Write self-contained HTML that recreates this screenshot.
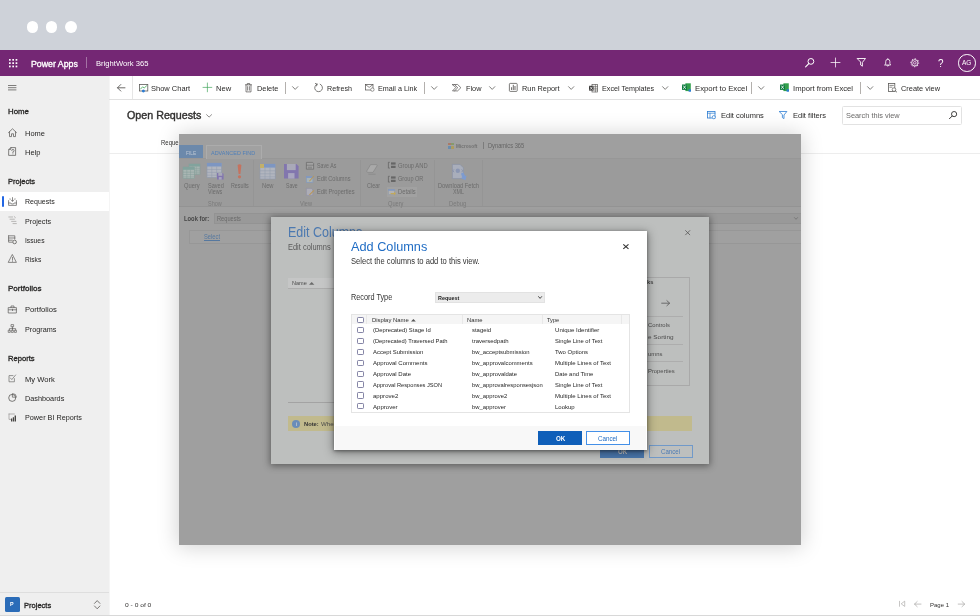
<!DOCTYPE html>
<html><head><meta charset="utf-8"><title>Power Apps</title>
<style>
html,body{margin:0;padding:0;}
body{width:980px;height:616px;position:relative;overflow:hidden;background:#fff;
font-family:"Liberation Sans",sans-serif;}
div,span.t,svg{position:absolute;display:block;box-sizing:border-box;}
span.t{white-space:nowrap;transform-origin:0 50%;}
svg{overflow:visible;}
#root{left:0;top:0;width:980px;height:616px;will-change:transform;}
</style></head>
<body>
<div id="root">
<div style="left:0px;top:0px;width:980px;height:50px;background:#ced2d9;"></div>
<div style="left:26.6px;top:21.299999999999997px;width:11.8px;height:11.8px;background:#fff;border-radius:50%;"></div>
<div style="left:45.7px;top:21.299999999999997px;width:11.8px;height:11.8px;background:#fff;border-radius:50%;"></div>
<div style="left:65.1px;top:21.299999999999997px;width:11.8px;height:11.8px;background:#fff;border-radius:50%;"></div>
<div style="left:0px;top:50px;width:980px;height:26px;background:#742774;"></div>
<div style="left:0px;top:76px;width:109px;height:540px;background:#efefef;"></div>
<div style="left:109px;top:76px;width:1px;height:540px;background:#f5f5f5;"></div>
<div style="left:109px;top:99px;width:871px;height:1px;background:#e1e1e1;"></div>
<div style="left:132px;top:76px;width:1px;height:23px;background:#e6e6e6;"></div>
<div style="left:109px;top:153px;width:871px;height:1px;background:#ededed;"></div>
<div style="left:0px;top:615px;width:980px;height:1px;background:#d8d8d8;"></div>
<div style="left:0px;top:592px;width:109px;height:1px;background:#dedede;"></div>
<svg style="left:8.6px;top:58.6px;" width="9" height="9" viewBox="0 0 9 9"><rect x="0.0" y="0.0" width="1.7" height="1.7" fill="#fff"/><rect x="0.0" y="3.3" width="1.7" height="1.7" fill="#fff"/><rect x="0.0" y="6.6" width="1.7" height="1.7" fill="#fff"/><rect x="3.3" y="0.0" width="1.7" height="1.7" fill="#fff"/><rect x="3.3" y="3.3" width="1.7" height="1.7" fill="#fff"/><rect x="3.3" y="6.6" width="1.7" height="1.7" fill="#fff"/><rect x="6.6" y="0.0" width="1.7" height="1.7" fill="#fff"/><rect x="6.6" y="3.3" width="1.7" height="1.7" fill="#fff"/><rect x="6.6" y="6.6" width="1.7" height="1.7" fill="#fff"/></svg>
<span class="t" style="transform:scaleX(0.9744);left:30.7px;top:60px;font-size:9px;line-height:9px;font-weight:400;color:#fff;-webkit-text-stroke:0.35px #fff;">Power Apps</span>
<div style="left:86px;top:57px;width:1px;height:11px;background:rgba(255,255,255,0.35);"></div>
<span class="t" style="transform:scaleX(1.0038);left:95.8px;top:60px;font-size:7.6px;line-height:7.6px;font-weight:400;color:#fff;">BrightWork 365</span>
<svg style="left:804.5px;top:58px;" width="9.5" height="9.5" viewBox="0 0 9.5 9.5"><circle cx="5.9" cy="3.4" r="2.9" stroke="#fff" stroke-width="1" fill="none"/><path d="M3.8 5.6 L0.6 8.9" stroke="#fff" stroke-width="1.1" fill="none" stroke-linecap="round" stroke-linejoin="round"/></svg>
<svg style="left:831px;top:58px;" width="9" height="9" viewBox="0 0 9 9"><path d="M4.5 0 V9 M0 4.5 H9" stroke="#fff" stroke-width="0.75" fill="none" stroke-linecap="round" stroke-linejoin="round"/></svg>
<svg style="left:857px;top:58.3px;" width="9" height="9" viewBox="0 0 9 9"><path d="M0.5 0.5 H8.5 L5.4 4.4 V8.2 L3.6 7 V4.4 Z" stroke="#fff" stroke-width="0.9" fill="none" stroke-linecap="round" stroke-linejoin="round"/></svg>
<svg style="left:884.3px;top:57.6px;" width="7.6" height="9.6" viewBox="0 0 7.6 9.6"><path d="M0.9 7 H6.7 L5.9 5.8 V3.6 A2.1 2.3 0 0 0 1.7 3.6 V5.8 Z M3.8 1.2 V0.6 M2.9 7.4 A0.95 1.1 0 0 0 4.7 7.4" stroke="#fff" stroke-width="0.8" fill="none" stroke-linecap="round" stroke-linejoin="round"/></svg>
<svg style="left:909.5px;top:57.8px;" width="9.6" height="9.6" viewBox="0 0 9.6 9.6"><circle cx="4.8" cy="4.8" r="3.9" stroke="#fff" stroke-width="1.0" fill="none" stroke-dasharray="1.55 1.51" stroke-dashoffset="0.7"/><circle cx="4.8" cy="4.8" r="3.1" stroke="#fff" stroke-width="0.8" fill="none"/><circle cx="4.8" cy="4.8" r="1.3" stroke="#fff" stroke-width="0.7" fill="none"/></svg>
<span class="t" style="transform:scaleX(0.9412);left:937.8px;top:58px;font-size:10.5px;line-height:10.5px;font-weight:400;color:#fff;">?</span>
<div style="left:958px;top:54px;width:17.6px;height:17.6px;border:1px solid #fff;border-radius:50%;"></div>
<span class="t" style="transform:scaleX(0.9862);left:962.2px;top:60px;font-size:6.6px;line-height:6.6px;font-weight:400;color:#fff;">AG</span>
<svg style="left:7.6px;top:85.2px;" width="8.4" height="6" viewBox="0 0 8.4 6"><path d="M0 0.5 H8.4 M0 2.7 H8.4 M0 4.9 H8.4" stroke="#605e5c" stroke-width="0.8" fill="none"/></svg>
<svg style="left:116.6px;top:83.8px;" width="8" height="7.6" viewBox="0 0 8 7.6"><path d="M8 3.8 H0.6 M3.8 0.5 L0.5 3.8 L3.8 7.1" stroke="#484644" stroke-width="0.8" fill="none" stroke-linecap="round" stroke-linejoin="round"/></svg>
<svg style="left:138.7px;top:83.5px;" width="9.2" height="8.4" viewBox="0 0 9.2 8.4"><rect x="0.4" y="0.4" width="8.4" height="6.6" stroke="#5c5a58" stroke-width="0.8" fill="none"/><path d="M1.6 5 L3.6 2.8 L5.2 4 L7.6 1.8" stroke="#3aa655" stroke-width="0.8" fill="none" stroke-linecap="round" stroke-linejoin="round"/><circle cx="4.4" cy="6.9" r="1.5" fill="#2b7cd3"/></svg>
<span class="t" style="transform:scaleX(0.9758);left:151.4px;top:85px;font-size:7.7px;line-height:7.7px;font-weight:400;color:#2b2a29;">Show Chart</span>
<svg style="left:202.9px;top:83.3px;" width="8.8" height="8.8" viewBox="0 0 8.8 8.8"><path d="M4.4 0 V8.8 M0 4.4 H8.8" stroke="#45a85d" stroke-width="0.7" fill="none" stroke-linecap="round" stroke-linejoin="round"/></svg>
<span class="t" style="transform:scaleX(0.9876);left:216.3px;top:85px;font-size:7.7px;line-height:7.7px;font-weight:400;color:#2b2a29;">New</span>
<svg style="left:245px;top:83px;" width="7" height="9.4" viewBox="0 0 7 9.4"><path d="M0.5 1.8 H6.5 M2.3 1.8 V0.5 H4.7 V1.8 M1 1.8 V8.9 H6 V1.8 M2.6 3.6 V7.2 M4.4 3.6 V7.2" stroke="#5c5a58" stroke-width="0.75" fill="none" stroke-linecap="round" stroke-linejoin="round"/></svg>
<span class="t" style="transform:scaleX(0.9580);left:257.2px;top:85px;font-size:7.7px;line-height:7.7px;font-weight:400;color:#2b2a29;">Delete</span>
<div style="left:285.4px;top:82px;width:1px;height:11.5px;background:#b3b0ad;"></div>
<svg style="left:292.3px;top:86px;" width="6.4" height="4" viewBox="0 0 6.4 4"><path d="M0.3 0.4 L3.2 3.4 L6.1000000000000005 0.4" stroke="#605e5c" stroke-width="0.8" fill="none"/></svg>
<svg style="left:314.3px;top:83px;" width="9.2" height="9.4" viewBox="0 0 9.2 9.4"><path d="M6.2 1.2 A3.9 3.9 0 1 1 3 1.2 M3 1.2 L1.4 0.5 M3 1.2 L2.6 2.9" stroke="#5c5a58" stroke-width="0.8" fill="none" stroke-linecap="round" stroke-linejoin="round"/></svg>
<span class="t" style="transform:scaleX(0.9286);left:327px;top:85px;font-size:7.7px;line-height:7.7px;font-weight:400;color:#2b2a29;">Refresh</span>
<svg style="left:365px;top:84.2px;" width="9.4" height="7.4" viewBox="0 0 9.4 7.4"><rect x="0.4" y="0.4" width="7.6" height="5.6" stroke="#5c5a58" stroke-width="0.75" fill="none"/><path d="M0.6 0.7 L4.2 3.4 L7.8 0.7" stroke="#5c5a58" stroke-width="0.7" fill="none" stroke-linecap="round" stroke-linejoin="round"/><circle cx="7.4" cy="5.6" r="1.7" fill="#fff" stroke="#5c5a58" stroke-width="0.6"/></svg>
<span class="t" style="transform:scaleX(0.9337);left:377.9px;top:85px;font-size:7.7px;line-height:7.7px;font-weight:400;color:#2b2a29;">Email a Link</span>
<div style="left:424.2px;top:82px;width:1px;height:11.5px;background:#b3b0ad;"></div>
<svg style="left:431px;top:86px;" width="6.4" height="4" viewBox="0 0 6.4 4"><path d="M0.3 0.4 L3.2 3.4 L6.1000000000000005 0.4" stroke="#605e5c" stroke-width="0.8" fill="none"/></svg>
<svg style="left:452.3px;top:84px;" width="9.4" height="7.4" viewBox="0 0 9.4 7.4"><path d="M0.5 0.5 H5.6 L8.9 3.7 L5.6 6.9 H0.5 L3.6 3.7 Z M2.6 0.6 L5.8 3.7 L2.6 6.8" stroke="#5c5a58" stroke-width="0.75" fill="none" stroke-linecap="round" stroke-linejoin="round"/></svg>
<span class="t" style="transform:scaleX(0.9486);left:465.8px;top:85px;font-size:7.7px;line-height:7.7px;font-weight:400;color:#2b2a29;">Flow</span>
<svg style="left:488.8px;top:86px;" width="6.4" height="4" viewBox="0 0 6.4 4"><path d="M0.3 0.4 L3.2 3.4 L6.1000000000000005 0.4" stroke="#605e5c" stroke-width="0.8" fill="none"/></svg>
<svg style="left:509.4px;top:83.4px;" width="8.6" height="8.8" viewBox="0 0 8.6 8.8"><rect x="0.4" y="0.4" width="7.8" height="8" rx="0.8" stroke="#5c5a58" stroke-width="0.8" fill="none"/><path d="M2.6 6.6 V4.6 M4.3 6.6 V2.2 M6 6.6 V3.4" stroke="#5c5a58" stroke-width="0.9" fill="none" stroke-linecap="round" stroke-linejoin="round"/></svg>
<span class="t" style="transform:scaleX(0.9564);left:522.4px;top:85px;font-size:7.7px;line-height:7.7px;font-weight:400;color:#2b2a29;">Run Report</span>
<svg style="left:567.8px;top:86px;" width="6.4" height="4" viewBox="0 0 6.4 4"><path d="M0.3 0.4 L3.2 3.4 L6.1000000000000005 0.4" stroke="#605e5c" stroke-width="0.8" fill="none"/></svg>
<svg style="left:588.7px;top:83.6px;" width="9" height="8.4" viewBox="0 0 9 8.4"><rect x="3" y="0.4" width="5.6" height="7.6" stroke="#5c5a58" stroke-width="0.7" fill="none"/><path d="M5 2.4 H8.4 M5 4.2 H8.4 M5 6 H8.4 M6.4 0.6 V7.8" stroke="#5c5a58" stroke-width="0.6" fill="none" stroke-linecap="round" stroke-linejoin="round"/><rect x="0" y="1.8" width="4.6" height="4.8" fill="#3b3a39"/><path d="M1.3 3 L3.3 5.4 M3.3 3 L1.3 5.4" stroke="#fff" stroke-width="0.7" fill="none" stroke-linecap="round" stroke-linejoin="round"/></svg>
<span class="t" style="transform:scaleX(0.9348);left:601.6px;top:85px;font-size:7.7px;line-height:7.7px;font-weight:400;color:#2b2a29;">Excel Templates</span>
<svg style="left:662px;top:86px;" width="6.4" height="4" viewBox="0 0 6.4 4"><path d="M0.3 0.4 L3.2 3.4 L6.1000000000000005 0.4" stroke="#605e5c" stroke-width="0.8" fill="none"/></svg>
<svg style="left:682px;top:83.4px;" width="9.2" height="8.8" viewBox="0 0 9.2 8.8"><rect x="3.4" y="0.3" width="5.4" height="7.8" fill="#33a04c"/><rect x="0" y="1.5" width="5" height="5.4" fill="#107c41"/><path d="M1.5 2.9 L3.5 5.5 M3.5 2.9 L1.5 5.5" stroke="#fff" stroke-width="0.8" fill="none" stroke-linecap="round" stroke-linejoin="round"/><rect x="6.6" y="6.3" width="2.4" height="2.4" fill="#2b7cd3"/></svg>
<span class="t" style="transform:scaleX(1.0077);left:695.2px;top:85px;font-size:7.7px;line-height:7.7px;font-weight:400;color:#2b2a29;">Export to Excel</span>
<div style="left:751.2px;top:82px;width:1px;height:11.5px;background:#b3b0ad;"></div>
<svg style="left:758.4px;top:86px;" width="6.4" height="4" viewBox="0 0 6.4 4"><path d="M0.3 0.4 L3.2 3.4 L6.1000000000000005 0.4" stroke="#605e5c" stroke-width="0.8" fill="none"/></svg>
<svg style="left:780px;top:83.4px;" width="9.2" height="8.8" viewBox="0 0 9.2 8.8"><rect x="3.4" y="0.3" width="5.4" height="7.8" fill="#33a04c"/><rect x="0" y="1.5" width="5" height="5.4" fill="#107c41"/><path d="M1.5 2.9 L3.5 5.5 M3.5 2.9 L1.5 5.5" stroke="#fff" stroke-width="0.8" fill="none" stroke-linecap="round" stroke-linejoin="round"/><rect x="6.6" y="6.3" width="2.4" height="2.4" fill="#2b7cd3"/></svg>
<span class="t" style="transform:scaleX(0.9961);left:793px;top:85px;font-size:7.7px;line-height:7.7px;font-weight:400;color:#2b2a29;">Import from Excel</span>
<div style="left:859.5px;top:82px;width:1px;height:11.5px;background:#b3b0ad;"></div>
<svg style="left:866.6px;top:86px;" width="6.4" height="4" viewBox="0 0 6.4 4"><path d="M0.3 0.4 L3.2 3.4 L6.1000000000000005 0.4" stroke="#605e5c" stroke-width="0.8" fill="none"/></svg>
<svg style="left:888px;top:83.2px;" width="9" height="9" viewBox="0 0 9 9"><rect x="0.4" y="0.4" width="6.4" height="8" stroke="#5c5a58" stroke-width="0.8" fill="none"/><path d="M1.8 2.4 H5.4 M1.8 4.2 H4" stroke="#5c5a58" stroke-width="0.7" fill="none" stroke-linecap="round" stroke-linejoin="round"/><circle cx="6" cy="6.6" r="1.8" fill="#fff" stroke="#5c5a58" stroke-width="0.7"/><path d="M7.4 8 L8.7 9" stroke="#5c5a58" stroke-width="0.8" fill="none" stroke-linecap="round" stroke-linejoin="round"/></svg>
<span class="t" style="transform:scaleX(0.9607);left:901px;top:85px;font-size:7.7px;line-height:7.7px;font-weight:400;color:#2b2a29;">Create view</span>
<span class="t" style="transform:scaleX(0.9830);left:126.9px;top:110px;font-size:10.9px;line-height:10.9px;font-weight:400;color:#323130;-webkit-text-stroke:0.4px #323130;">Open Requests</span>
<svg style="left:206.4px;top:113.6px;" width="6.2" height="3.6" viewBox="0 0 6.2 3.6"><path d="M0.3 0.4 L3.1 3.1 L5.9 0.4" stroke="#605e5c" stroke-width="0.7" fill="none"/></svg>
<svg style="left:707.4px;top:111px;" width="8.8" height="8" viewBox="0 0 8.8 8"><rect x="0.4" y="0.4" width="7.6" height="6.6" stroke="#2b7cd3" stroke-width="0.8" fill="none"/><path d="M0.4 2.2 H8 M3 2.2 V7" stroke="#2b7cd3" stroke-width="0.7" fill="none" stroke-linecap="round" stroke-linejoin="round"/><circle cx="6.8" cy="6.2" r="1.6" fill="#fff" stroke="#2b7cd3" stroke-width="0.7"/></svg>
<span class="t" style="transform:scaleX(0.9724);left:721px;top:112px;font-size:7.7px;line-height:7.7px;font-weight:400;color:#2b2a29;">Edit columns</span>
<svg style="left:779px;top:111.2px;" width="8.4" height="8.2" viewBox="0 0 8.4 8.2"><path d="M0.5 0.5 H7.9 L5 4 V7.6 L3.4 6.6 V4 Z" stroke="#2b7cd3" stroke-width="0.8" fill="none" stroke-linecap="round" stroke-linejoin="round"/></svg>
<span class="t" style="transform:scaleX(0.9778);left:792.7px;top:112px;font-size:7.7px;line-height:7.7px;font-weight:400;color:#2b2a29;">Edit filters</span>
<div style="left:842.2px;top:105.5px;width:120px;height:19px;background:#fff;border:1px solid #e2e2e2;border-radius:1.5px;"></div>
<span class="t" style="transform:scaleX(0.9592);left:846px;top:112px;font-size:7.7px;line-height:7.7px;font-weight:400;color:#6b6a69;">Search this view</span>
<svg style="left:948.7px;top:111px;" width="8.2" height="8.2" viewBox="0 0 8.2 8.2"><circle cx="5.1" cy="3.1" r="2.6" stroke="#323130" stroke-width="0.9" fill="none"/><path d="M3.2 5 L0.5 7.7" stroke="#323130" stroke-width="1.0" fill="none" stroke-linecap="round" stroke-linejoin="round"/></svg>
<span class="t" style="transform:scaleX(0.9055);left:161px;top:140px;font-size:6.6px;line-height:6.6px;font-weight:400;color:#323130;">Reque</span>
<span class="t" style="transform:scaleX(1.0187);left:7.8px;top:108px;font-size:7.7px;line-height:7.7px;font-weight:400;color:#252423;-webkit-text-stroke:0.3px #252423;">Home</span>
<svg style="left:8px;top:127.8px;" width="9" height="9.2" viewBox="0 0 9 9.2"><path d="M0.5 4.6 L4.5 0.8 L8.5 4.6 M1.5 3.9 V8.6 H3.5 V5.8 H5.5 V8.6 H7.5 V3.9" stroke="#5a5856" stroke-width="0.75" fill="none" stroke-linecap="round" stroke-linejoin="round"/></svg>
<span class="t" style="transform:scaleX(0.9700);left:24.7px;top:130px;font-size:7.7px;line-height:7.7px;font-weight:400;color:#252423;">Home</span>
<svg style="left:8px;top:146.89999999999998px;" width="9" height="9.2" viewBox="0 0 9 9.2"><path d="M1 2.4 L2.8 0.6 H7.6 V8.4 H1 Z M1 2.4 H2.8 V0.6" stroke="#5a5856" stroke-width="0.75" fill="none" stroke-linecap="round" stroke-linejoin="round"/><path d="M3.7 3.6 A1.2 1.2 0 1 1 4.9 4.8 V5.6 M4.9 6.8 V7" stroke="#5a5856" stroke-width="0.7" fill="none" stroke-linecap="round" stroke-linejoin="round"/></svg>
<span class="t" style="transform:scaleX(0.9739);left:24.7px;top:149px;font-size:7.7px;line-height:7.7px;font-weight:400;color:#252423;">Help</span>
<span class="t" style="transform:scaleX(0.9755);left:7.8px;top:178px;font-size:7.7px;line-height:7.7px;font-weight:400;color:#252423;-webkit-text-stroke:0.3px #252423;">Projects</span>
<div style="left:0px;top:192.3px;width:109px;height:18.8px;background:#fff;"></div>
<div style="left:2.1px;top:196px;width:2px;height:11px;background:#2266e3;border-radius:1px;"></div>
<svg style="left:8px;top:196.7px;" width="9" height="9.2" viewBox="0 0 9 9.2"><path d="M0.6 3.6 V8.4 H8.4 V3.6 M0.6 6 H2.8 L3.4 7 H5.6 L6.2 6 H8.4 M4.5 0.6 V4.2 M3.2 3 L4.5 4.3 L5.8 3 M2.2 2 H1.8 M6.8 2 H7.2" stroke="#5a5856" stroke-width="0.7" fill="none" stroke-linecap="round" stroke-linejoin="round"/></svg>
<span class="t" style="transform:scaleX(0.9143);left:24.7px;top:198px;font-size:7.7px;line-height:7.7px;font-weight:400;color:#252423;">Requests</span>
<svg style="left:8px;top:216.2px;" width="9" height="9.2" viewBox="0 0 9 9.2"><path d="M0.8 1 H4.6 M2 3.2 H6.4 M3.6 5.4 H8 M5 7.6 H8.4 M6.2 0.6 L7.4 1.6" stroke="#8a8886" stroke-width="0.55" fill="none" stroke-linecap="round" stroke-linejoin="round"/></svg>
<span class="t" style="transform:scaleX(0.9395);left:24.7px;top:218px;font-size:7.7px;line-height:7.7px;font-weight:400;color:#252423;">Projects</span>
<svg style="left:8px;top:235.39999999999998px;" width="9" height="9.2" viewBox="0 0 9 9.2"><path d="M0.6 0.8 H6.8 V4 M0.6 0.8 V7.2 H4.2 M0.6 3 H6.8 M0.6 5.2 H4.4" stroke="#5a5856" stroke-width="0.7" fill="none" stroke-linecap="round" stroke-linejoin="round"/><circle cx="6.6" cy="7" r="1.8" stroke="#484644" stroke-width="0.7" fill="none"/></svg>
<span class="t" style="transform:scaleX(0.8776);left:24.7px;top:237px;font-size:7.7px;line-height:7.7px;font-weight:400;color:#252423;">Issues</span>
<svg style="left:8px;top:254.39999999999998px;" width="9" height="9.2" viewBox="0 0 9 9.2"><path d="M4.5 0.8 L8.4 8.4 H0.6 Z M4.5 3.4 V6 M4.5 7 V7.3" stroke="#5a5856" stroke-width="0.7" fill="none" stroke-linecap="round" stroke-linejoin="round"/></svg>
<span class="t" style="transform:scaleX(0.8618);left:24.7px;top:256px;font-size:7.7px;line-height:7.7px;font-weight:400;color:#252423;">Risks</span>
<span class="t" style="transform:scaleX(1.0422);left:7.8px;top:285px;font-size:7.7px;line-height:7.7px;font-weight:400;color:#252423;-webkit-text-stroke:0.3px #252423;">Portfolios</span>
<svg style="left:8px;top:304.8px;" width="9" height="9.2" viewBox="0 0 9 9.2"><path d="M0.6 2.6 H8.4 V8 H0.6 Z M3 2.6 V1 H6 V2.6 M0.6 4.8 H8.4 M4.5 4.2 V5.6" stroke="#5a5856" stroke-width="0.7" fill="none" stroke-linecap="round" stroke-linejoin="round"/></svg>
<span class="t" style="transform:scaleX(0.9923);left:24.7px;top:306px;font-size:7.7px;line-height:7.7px;font-weight:400;color:#252423;">Portfolios</span>
<svg style="left:8px;top:324.0px;" width="9" height="9.2" viewBox="0 0 9 9.2"><path d="M3.4 0.6 H5.6 V2.8 H3.4 Z M4.5 2.8 V4.6 M1.4 6.2 V4.6 H7.6 V6.2 M4.5 4.6 V6.2 M0.6 6.2 H2.2 V8.4 H0.6 Z M3.7 6.2 H5.3 V8.4 H3.7 Z M6.8 6.2 H8.4 V8.4 H6.8 Z" stroke="#5a5856" stroke-width="0.65" fill="none" stroke-linecap="round" stroke-linejoin="round"/></svg>
<span class="t" style="transform:scaleX(0.9451);left:24.7px;top:326px;font-size:7.7px;line-height:7.7px;font-weight:400;color:#252423;">Programs</span>
<span class="t" style="transform:scaleX(0.9880);left:7.8px;top:355px;font-size:7.7px;line-height:7.7px;font-weight:400;color:#252423;-webkit-text-stroke:0.3px #252423;">Reports</span>
<svg style="left:8px;top:374.0px;" width="9" height="9.2" viewBox="0 0 9 9.2"><path d="M6.4 4.6 V7.8 H1 V1.6 H5 M2.4 4 L3.8 5.6 L7.6 1" stroke="#6b6a69" stroke-width="0.7" fill="none" stroke-linecap="round" stroke-linejoin="round"/></svg>
<span class="t" style="transform:scaleX(0.9872);left:24.7px;top:376px;font-size:7.7px;line-height:7.7px;font-weight:400;color:#252423;">My Work</span>
<svg style="left:8px;top:393.09999999999997px;" width="9" height="9.2" viewBox="0 0 9 9.2"><circle cx="4.2" cy="4.9" r="3.5" stroke="#484644" stroke-width="0.7" fill="none"/><path d="M4.8 0.6 A3.6 3.6 0 0 1 8.4 4.2 H4.8 Z" stroke="#5a5856" stroke-width="0.7" fill="none" stroke-linecap="round" stroke-linejoin="round"/></svg>
<span class="t" style="transform:scaleX(0.9481);left:24.7px;top:395px;font-size:7.7px;line-height:7.7px;font-weight:400;color:#252423;">Dashboards</span>
<svg style="left:8px;top:412.59999999999997px;" width="9" height="9.2" viewBox="0 0 9 9.2"><path d="M1 1 H6.4 M1 1 V6.4 H2.6" stroke="#8a8886" stroke-width="0.6" fill="none" stroke-linecap="round" stroke-linejoin="round"/><path d="M3 8.4 V5.6 H4.2 V8.4 Z M4.8 8.4 V4.2 H6 V8.4 Z M6.6 8.4 V2.6 H8 V8.4 Z" fill="#484644"/></svg>
<span class="t" style="transform:scaleX(0.9427);left:24.7px;top:414px;font-size:7.7px;line-height:7.7px;font-weight:400;color:#252423;">Power BI Reports</span>
<div style="left:4.6px;top:596.8px;width:15px;height:15px;background:#2b6cb8;border-radius:1.5px;"></div>
<span class="t" style="transform:scaleX(0.9974);left:10.2px;top:602px;font-size:5.4px;line-height:5.4px;font-weight:700;color:#fff;">P</span>
<span class="t" style="transform:scaleX(0.9791);left:23.9px;top:602px;font-size:7.7px;line-height:7.7px;font-weight:400;color:#252423;-webkit-text-stroke:0.3px #252423;">Projects</span>
<svg style="left:93.6px;top:599.8px;" width="6.4" height="9.4" viewBox="0 0 6.4 9.4"><path d="M0.5 3.4 L3.2 0.6 L5.9 3.4 M0.5 6 L3.2 8.8 L5.9 6" stroke="#5a5856" stroke-width="0.8" fill="none" stroke-linecap="round" stroke-linejoin="round"/></svg>
<span class="t" style="transform:scaleX(1.0769);left:124.6px;top:602px;font-size:6.2px;line-height:6.2px;font-weight:400;color:#323130;">0 - 0 of 0</span>
<svg style="left:899.4px;top:601px;" width="5.8" height="5.6" viewBox="0 0 5.8 5.6"><path d="M0.5 0.3 V5.3 M5.4 0.4 L2.2 2.8 L5.4 5.2 Z" stroke="#a19f9d" stroke-width="0.6" fill="none" stroke-linecap="round" stroke-linejoin="round"/></svg>
<svg style="left:914.3px;top:600.6px;" width="7.2" height="6.2" viewBox="0 0 7.2 6.2"><path d="M7 3.1 H0.6 M3.2 0.5 L0.5 3.1 L3.2 5.7" stroke="#a19f9d" stroke-width="0.65" fill="none" stroke-linecap="round" stroke-linejoin="round"/></svg>
<span class="t" style="transform:scaleX(0.9682);left:930px;top:602px;font-size:6.2px;line-height:6.2px;font-weight:400;color:#323130;">Page 1</span>
<svg style="left:958px;top:600.6px;" width="7.2" height="6.2" viewBox="0 0 7.2 6.2"><path d="M0.2 3.1 H6.6 M4 0.5 L6.7 3.1 L4 5.7" stroke="#a19f9d" stroke-width="0.65" fill="none" stroke-linecap="round" stroke-linejoin="round"/></svg>
<div style="left:179px;top:134px;width:622px;height:411px;background:#9f9f9f;box-shadow:0 1px 20px 1px rgba(0,0,0,0.18);"></div>
<div style="left:179px;top:158px;width:622px;height:49px;background:#9b9b9b;border-top:1px solid #979797;border-bottom:1px solid #939393;"></div>
<div style="left:448.1px;top:142.5px;width:2.9px;height:2.9px;background:#ab7a68;"></div>
<div style="left:451.40000000000003px;top:142.5px;width:2.9px;height:2.9px;background:#869b6c;"></div>
<div style="left:448.1px;top:145.8px;width:2.9px;height:2.9px;background:#6a8cae;"></div>
<div style="left:451.40000000000003px;top:145.8px;width:2.9px;height:2.9px;background:#ad9b5e;"></div>
<span class="t" style="transform:scaleX(0.7889);left:456.2px;top:143px;font-size:6px;line-height:6px;font-weight:700;color:#727272;">Microsoft</span>
<div style="left:483px;top:142px;width:1px;height:7.4px;background:#7c7c7c;"></div>
<span class="t" style="transform:scaleX(0.8938);left:488px;top:143px;font-size:6.4px;line-height:6.4px;font-weight:400;color:#666;">Dynamics 365</span>
<div style="left:179px;top:145px;width:24.2px;height:13.2px;background:#6c89ab;"></div>
<span class="t" style="transform:scaleX(0.8408);left:185.7px;top:151px;font-size:5.8px;line-height:5.8px;font-weight:400;color:#bcc6d3;">FILE</span>
<div style="left:205.5px;top:145px;width:56px;height:14px;background:#a1a1a1;border:1px solid #acacac;border-bottom:none;"></div>
<span class="t" style="transform:scaleX(0.9399);left:211.4px;top:151px;font-size:5.8px;line-height:5.8px;font-weight:400;color:#4f7fb8;">ADVANCED FIND</span>
<svg style="left:189px;top:164px;" width="11" height="10.5" viewBox="0 0 11 10.5"><rect x="0" y="0" width="11" height="10.5" fill="#a6b4b1" stroke="#869e9a" stroke-width="0.6"/><rect x="0" y="0" width="11" height="2.5" fill="#82a39d"/><path d="M0 4.7 H11" stroke="#869e9a" stroke-width="0.5"/><path d="M0 6.8 H11" stroke="#869e9a" stroke-width="0.5"/><path d="M0 8.9 H11" stroke="#869e9a" stroke-width="0.5"/><path d="M3.6 2.5 V10.5" stroke="#869e9a" stroke-width="0.5"/><path d="M7.3 2.5 V10.5" stroke="#869e9a" stroke-width="0.5"/></svg>
<svg style="left:183px;top:167.4px;" width="11.4" height="11.6" viewBox="0 0 11.4 11.6"><rect x="0" y="0" width="11.4" height="11.6" fill="#a9b6b3" stroke="#869e9a" stroke-width="0.6"/><rect x="0" y="0" width="11.4" height="2.8" fill="#82a39d"/><path d="M0 5.2 H11.4" stroke="#869e9a" stroke-width="0.5"/><path d="M0 7.5 H11.4" stroke="#869e9a" stroke-width="0.5"/><path d="M0 9.9 H11.4" stroke="#869e9a" stroke-width="0.5"/><path d="M3.8 2.8 V11.6" stroke="#869e9a" stroke-width="0.5"/><path d="M7.5 2.8 V11.6" stroke="#869e9a" stroke-width="0.5"/></svg>
<span class="t" style="transform:scaleX(0.8868);left:183.8px;top:183px;font-size:6.5px;line-height:6.5px;font-weight:400;color:#6c6c6c;">Query</span>
<svg style="left:207px;top:163.4px;" width="14.6" height="14.4" viewBox="0 0 14.6 14.4"><rect x="0" y="0" width="14.6" height="14.4" fill="#b1b5be" stroke="#8f99ad" stroke-width="0.6"/><rect x="0" y="0" width="14.6" height="3.5" fill="#7d96c2"/><path d="M0 6.5 H14.6" stroke="#8f99ad" stroke-width="0.5"/><path d="M0 9.4 H14.6" stroke="#8f99ad" stroke-width="0.5"/><path d="M0 12.2 H14.6" stroke="#8f99ad" stroke-width="0.5"/><path d="M4.8 3.5 V14.4" stroke="#8f99ad" stroke-width="0.5"/><path d="M9.6 3.5 V14.4" stroke="#8f99ad" stroke-width="0.5"/></svg>
<svg style="left:217.4px;top:172.8px;" width="6.6" height="6.6" viewBox="0 0 6.6 6.6"><path d="M0 0 H5.6 L6.6 1.0 V6.6 H0 Z" fill="#8276ae"/><rect x="1.3" y="0" width="4.0" height="2.8" fill="#a9a9b8"/><rect x="1.8" y="4.1" width="2.9" height="2.5" fill="#a9a6bf"/></svg>
<span class="t" style="transform:scaleX(0.8569);left:207.6px;top:183px;font-size:6.5px;line-height:6.5px;font-weight:400;color:#6c6c6c;">Saved</span>
<span class="t" style="transform:scaleX(0.8239);left:208.4px;top:189px;font-size:6.5px;line-height:6.5px;font-weight:400;color:#6c6c6c;">Views</span>
<svg style="left:237px;top:164px;" width="5" height="15" viewBox="0 0 5 15"><path d="M0.6 1 Q2.5 -0.6 4.4 1 L3.4 10 H1.6 Z" fill="#c4735f"/><circle cx="2.5" cy="12.8" r="1.6" fill="#c4735f"/></svg>
<span class="t" style="transform:scaleX(0.8207);left:230.9px;top:183px;font-size:6.5px;line-height:6.5px;font-weight:400;color:#6c6c6c;">Results</span>
<span class="t" style="transform:scaleX(0.8484);left:208px;top:201px;font-size:6.5px;line-height:6.5px;font-weight:400;color:#7a7a7a;">Show</span>
<div style="left:253px;top:160px;width:1px;height:46px;background:#959595;"></div>
<svg style="left:260.4px;top:164.4px;" width="15.2" height="15" viewBox="0 0 15.2 15"><rect x="0" y="0" width="15.2" height="15" fill="#b1b5be" stroke="#8f99ad" stroke-width="0.6"/><rect x="0" y="0" width="15.2" height="3.6" fill="#7d96c2"/><path d="M0 6.8 H15.2" stroke="#8f99ad" stroke-width="0.5"/><path d="M0 9.8 H15.2" stroke="#8f99ad" stroke-width="0.5"/><path d="M0 12.8 H15.2" stroke="#8f99ad" stroke-width="0.5"/><path d="M5.0 3.6 V15" stroke="#8f99ad" stroke-width="0.5"/><path d="M10.0 3.6 V15" stroke="#8f99ad" stroke-width="0.5"/></svg>
<div style="left:259.6px;top:163.6px;width:4.4px;height:4.4px;background:#c2b06a;"></div>
<span class="t" style="transform:scaleX(0.8836);left:262px;top:183px;font-size:6.5px;line-height:6.5px;font-weight:400;color:#6c6c6c;">New</span>
<svg style="left:283.6px;top:164.4px;" width="14.6" height="14.6" viewBox="0 0 14.6 14.6"><path d="M0 0 H12.4 L14.6 2.2 V14.6 H0 Z" fill="#8276ae"/><rect x="2.9" y="0" width="8.8" height="6.1" fill="#a9a9b8"/><rect x="4.1" y="9.1" width="6.4" height="5.5" fill="#a9a6bf"/></svg>
<span class="t" style="transform:scaleX(0.7823);left:285.8px;top:183px;font-size:6.5px;line-height:6.5px;font-weight:400;color:#6c6c6c;">Save</span>
<svg style="left:306.4px;top:161.8px;" width="8" height="7.6" viewBox="0 0 8 7.6"><path d="M0.4 0.4 H6.6 L7.6 1.4 V7.2 H0.4 Z" fill="#a3a3a3" stroke="#686868" stroke-width="0.7"/><rect x="1.8" y="4.6" width="4.2" height="2.6" fill="#8a8a8a"/><path d="M0.4 3.2 H7.6" stroke="#666" stroke-width="0.6"/></svg>
<span class="t" style="transform:scaleX(0.8089);left:316.5px;top:163px;font-size:6.5px;line-height:6.5px;font-weight:400;color:#6c6c6c;">Save As</span>
<svg style="left:306.4px;top:174.8px;" width="8.4" height="7.8" viewBox="0 0 8.4 7.8"><rect x="0.3" y="1.4" width="6.6" height="6" fill="#a9b3b3" stroke="#7d96c2" stroke-width="0.6"/><rect x="0.3" y="1.4" width="6.6" height="1.5" fill="#7d96c2"/><path d="M3 6 L7.6 0.6 L8.3 1.3 L3.8 6.6 Z" fill="#b8975c"/></svg>
<span class="t" style="transform:scaleX(0.8666);left:316.5px;top:176px;font-size:6.5px;line-height:6.5px;font-weight:400;color:#6c6c6c;">Edit Columns</span>
<svg style="left:306.4px;top:188px;" width="8.4" height="7.8" viewBox="0 0 8.4 7.8"><path d="M0.4 0.4 H5.4 L6.8 1.8 V7.4 H0.4 Z" fill="#adadb6" stroke="#8e8ea4" stroke-width="0.6"/><path d="M3 6.6 L7.6 2 L8.3 2.7 L3.8 7.2 Z" fill="#b8975c"/></svg>
<span class="t" style="transform:scaleX(0.8841);left:316.5px;top:189px;font-size:6.5px;line-height:6.5px;font-weight:400;color:#6c6c6c;">Edit Properties</span>
<span class="t" style="transform:scaleX(0.8581);left:300px;top:201px;font-size:6.5px;line-height:6.5px;font-weight:400;color:#7a7a7a;">View</span>
<div style="left:359.6px;top:160px;width:1px;height:46px;background:#959595;"></div>
<svg style="left:365.7px;top:164px;" width="12" height="10.8" viewBox="0 0 12 10.8"><path d="M4.6 0.6 H10.4 Q11.6 0.8 11 2 L7 8.4 H1.6 Q0.2 8 1 6.6 Z" fill="#a9a9a9" stroke="#858585" stroke-width="0.7"/><path d="M2.4 10.2 H9.6" stroke="#858585" stroke-width="0.7"/></svg>
<span class="t" style="transform:scaleX(0.8362);left:367px;top:183px;font-size:6.5px;line-height:6.5px;font-weight:400;color:#6c6c6c;">Clear</span>
<svg style="left:388px;top:162.4px;" width="8" height="6.4" viewBox="0 0 8 6.4"><path d="M1.8 0.3 H0.4 V6.1 H1.8" stroke="#5e5e5e" stroke-width="0.7" fill="none"/><rect x="3" y="0.4" width="4.6" height="2.2" fill="#666"/><rect x="3" y="3.8" width="4.6" height="2.2" fill="#666"/></svg>
<svg style="left:388px;top:175.6px;" width="8" height="6.4" viewBox="0 0 8 6.4"><path d="M1.8 0.3 H0.4 V6.1 H1.8" stroke="#5e5e5e" stroke-width="0.7" fill="none"/><rect x="3" y="0.4" width="4.6" height="2.2" fill="#666"/><rect x="3" y="3.8" width="4.6" height="2.2" fill="#666"/></svg>
<span class="t" style="transform:scaleX(0.8902);left:398.2px;top:163px;font-size:6.5px;line-height:6.5px;font-weight:400;color:#6c6c6c;">Group AND</span>
<span class="t" style="transform:scaleX(0.8574);left:398.2px;top:176px;font-size:6.5px;line-height:6.5px;font-weight:400;color:#6c6c6c;">Group OR</span>
<div style="left:387px;top:187.4px;width:30.4px;height:9.4px;background:#a1a1a1;"></div>
<svg style="left:388px;top:188.6px;" width="8" height="6.8" viewBox="0 0 8 6.8"><rect x="0.3" y="0.3" width="6.4" height="5.4" fill="#b3b3b3" stroke="#8a96a8" stroke-width="0.5"/><rect x="0.3" y="0.3" width="6.4" height="1.4" fill="#7d96c2"/><path d="M2.6 4 H6 V2.8 L8 4.6 L6 6.4 V5.2 H2.6 Z" fill="#c2a85a"/></svg>
<span class="t" style="transform:scaleX(0.8906);left:398.2px;top:189px;font-size:6.5px;line-height:6.5px;font-weight:400;color:#6c6c6c;">Details</span>
<span class="t" style="transform:scaleX(0.8699);left:388px;top:201px;font-size:6.5px;line-height:6.5px;font-weight:400;color:#7a7a7a;">Query</span>
<div style="left:433.6px;top:160px;width:1px;height:46px;background:#959595;"></div>
<svg style="left:452px;top:163.6px;" width="15" height="16.6" viewBox="0 0 15 16.6"><path d="M0.4 0.4 H8 L11.4 3.8 V14.6 H0.4 Z" fill="#a9aebb" stroke="#8790a6" stroke-width="0.6"/><path d="M2 5.4 L0.9 6.8 L2 8.2 M9.6 5.4 L10.7 6.8 L9.6 8.2" stroke="#7d8aa6" stroke-width="0.7" fill="none"/><circle cx="5.8" cy="6.8" r="2.2" fill="#8b96b2"/><path d="M9 9.6 L11.4 8.6 L13.2 12 L14.6 11.4 L13.4 16.2 L8.8 14 L10.2 13.4 Z" fill="#7d9bd0"/></svg>
<span class="t" style="transform:scaleX(0.8726);left:437.8px;top:183px;font-size:6.5px;line-height:6.5px;font-weight:400;color:#6c6c6c;">Download Fetch</span>
<span class="t" style="transform:scaleX(0.8224);left:452.7px;top:189px;font-size:6.5px;line-height:6.5px;font-weight:400;color:#6c6c6c;">XML</span>
<span class="t" style="transform:scaleX(0.8979);left:448.8px;top:201px;font-size:6.5px;line-height:6.5px;font-weight:400;color:#7a7a7a;">Debug</span>
<div style="left:482.4px;top:160px;width:1px;height:46px;background:#959595;"></div>
<span class="t" style="transform:scaleX(0.8945);left:184.3px;top:216px;font-size:6.5px;line-height:6.5px;font-weight:700;color:#474747;">Look for:</span>
<div style="left:214px;top:213px;width:587px;height:10.6px;background:#999;border:1px solid #939393;border-right:none;"></div>
<span class="t" style="transform:scaleX(0.8701);left:216.8px;top:216px;font-size:6.5px;line-height:6.5px;font-weight:400;color:#6a6a6a;">Requests</span>
<svg style="left:793.6px;top:217px;" width="4" height="2.8" viewBox="0 0 4 2.8"><path d="M0.2 0.3 L2 2.3 L3.8 0.3" stroke="#6a6a6a" stroke-width="0.7" fill="none"/></svg>
<div style="left:189.3px;top:230px;width:611.7px;height:13.8px;background:#a0a0a0;border:1px solid #979797;border-right:none;"></div>
<span class="t" style="transform:scaleX(0.8850);left:203.6px;top:234px;font-size:6.5px;line-height:6.5px;font-weight:400;color:#56789f;text-decoration:underline;text-decoration-thickness:0.6px;text-underline-offset:0.6px;">Select</span>
<div style="left:271px;top:217px;width:438.2px;height:246.6px;background:#bdbfbe;box-shadow:0 1px 7px 1px rgba(0,0,0,0.42);"></div>
<span class="t" style="transform:scaleX(0.9054);left:288px;top:226px;font-size:13.8px;line-height:13.8px;font-weight:400;color:#4c79b0;">Edit Columns</span>
<span class="t" style="transform:scaleX(0.9109);left:288px;top:244px;font-size:8.2px;line-height:8.2px;font-weight:400;color:#5a5a5a;">Edit columns</span>
<svg style="left:685.3px;top:229.9px;" width="5.4" height="5.4" viewBox="0 0 5.4 5.4"><path d="M0.3 0.3 L5.1 5.1 M5.1 0.3 L0.3 5.1" stroke="#555" stroke-width="0.8"/></svg>
<div style="left:287.8px;top:277.5px;width:120px;height:11.6px;background:#c5c6c6;border-bottom:1px solid #adadad;"></div>
<span class="t" style="transform:scaleX(0.9099);left:292px;top:280px;font-size:6.1px;line-height:6.1px;font-weight:400;color:#4c4c4c;">Name</span>
<svg style="left:309.4px;top:282.2px;" width="5.4" height="2.8" viewBox="0 0 5.4 2.8"><path d="M0 2.8 L2.7 0 L5.4 2.8 Z" fill="#6a6a6a"/></svg>
<div style="left:287.8px;top:402.2px;width:312px;height:1px;background:#a3a3a3;"></div>
<div style="left:287.8px;top:416.2px;width:404.2px;height:15.2px;background:#c1ba8d;"></div>
<div style="left:292px;top:419.5px;width:8.4px;height:8.4px;background:#6a8db9;border-radius:50%;"></div>
<span class="t" style="transform:scaleX(0.7178);left:295.6px;top:421px;font-size:6px;line-height:6px;font-weight:700;color:#d5d5d5;">i</span>
<span class="t" style="transform:scaleX(0.9436);left:304.2px;top:421px;font-size:6.1px;line-height:6.1px;font-weight:700;color:#333;">Note:</span>
<span class="t" style="transform:scaleX(0.9986);left:320.6px;top:421px;font-size:6.1px;line-height:6.1px;font-weight:400;color:#4c4c4c;">When</span>
<div style="left:600px;top:277px;width:89.6px;height:109.4px;border:1px solid #a9a9a9;"></div>
<span class="t" style="transform:scaleX(0.9570);left:647.2px;top:279px;font-size:6px;line-height:6px;font-weight:700;color:#444;">ks</span>
<svg style="left:660.8px;top:299.6px;" width="9.2" height="6.4" viewBox="0 0 9.2 6.4"><path d="M0.3 3.2 H8.6 M5.6 0.4 L8.7 3.2 L5.6 6" stroke="#555" stroke-width="0.8" fill="none"/></svg>
<div style="left:630px;top:315.6px;width:53.2px;height:1px;background:#adadad;"></div>
<span class="t" style="transform:scaleX(0.9646);left:648.3px;top:322px;font-size:6.1px;line-height:6.1px;font-weight:400;color:#4c4c4c;">Controls</span>
<span class="t" style="transform:scaleX(1.0496);left:647.7px;top:334px;font-size:6.1px;line-height:6.1px;font-weight:400;color:#4c4c4c;">e Sorting</span>
<div style="left:630px;top:344px;width:53.2px;height:1px;background:#adadad;"></div>
<span class="t" style="transform:scaleX(0.9660);left:647.5px;top:351px;font-size:6.1px;line-height:6.1px;font-weight:400;color:#4c4c4c;">umns</span>
<div style="left:630px;top:360.8px;width:53.2px;height:1px;background:#adadad;"></div>
<span class="t" style="transform:scaleX(0.9611);left:648.3px;top:368px;font-size:6.1px;line-height:6.1px;font-weight:400;color:#4c4c4c;">Properties</span>
<div style="left:600.4px;top:444.5px;width:43.8px;height:13px;background:#4a77ad;"></div>
<span class="t" style="transform:scaleX(0.9302);left:617.6px;top:449px;font-size:6.6px;line-height:6.6px;font-weight:700;color:#c4c4c4;">OK</span>
<div style="left:648.6px;top:444.5px;width:44px;height:13px;border:1px solid #7099c9;"></div>
<span class="t" style="transform:scaleX(0.9254);left:661px;top:449px;font-size:6.6px;line-height:6.6px;font-weight:400;color:#4d7bb3;">Cancel</span>
<div style="left:334.2px;top:230.9px;width:312.6px;height:219.5px;background:#fff;box-shadow:0 1px 3px rgba(0,0,0,0.4),0 2px 9px 1px rgba(0,0,0,0.36);"></div>
<span class="t" style="transform:scaleX(0.9776);left:351.1px;top:240px;font-size:13px;line-height:13px;font-weight:400;color:#1f6cc4;">Add Columns</span>
<span class="t" style="transform:scaleX(0.9063);left:351.1px;top:257px;font-size:8.4px;line-height:8.4px;font-weight:400;color:#333;">Select the columns to add to this view.</span>
<svg style="left:622.7px;top:244px;" width="5.8" height="5.2" viewBox="0 0 5.8 5.2"><path d="M0.3 0.3 L5.5 4.9 M5.5 0.3 L0.3 4.9" stroke="#333" stroke-width="1.1"/></svg>
<span class="t" style="transform:scaleX(0.8702);left:351.1px;top:293px;font-size:8.4px;line-height:8.4px;font-weight:400;color:#333;">Record Type</span>
<div style="left:435.2px;top:292px;width:109.5px;height:10.7px;background:#ececec;border:1px solid #e2e2e2;"></div>
<span class="t" style="transform:scaleX(0.9040);left:438px;top:295px;font-size:6px;line-height:6px;font-weight:700;color:#222;">Request</span>
<svg style="left:537.8px;top:296.2px;" width="4.2" height="3" viewBox="0 0 4.2 3"><path d="M0.3 0.3 L2.1 2.4 L3.9 0.3" stroke="#333" stroke-width="0.9" fill="none"/></svg>
<div style="left:351px;top:313.6px;width:278.6px;height:99.6px;background:#fff;border:1px solid #e4e4e4;"></div>
<div style="left:352px;top:314.6px;width:276.6px;height:9.4px;background:#f5f5f5;"></div>
<div style="left:366.4px;top:314.6px;width:1px;height:9.4px;background:#e8e8e8;"></div>
<div style="left:461.8px;top:314.6px;width:1px;height:9.4px;background:#e8e8e8;"></div>
<div style="left:542.1px;top:314.6px;width:1px;height:9.4px;background:#e8e8e8;"></div>
<div style="left:620.7px;top:314.6px;width:1px;height:9.4px;background:#e8e8e8;"></div>
<div style="left:357.4px;top:316.59999999999997px;width:6.2px;height:6.2px;background:#fff;border:1px solid #8585a6;border-radius:1.2px;"></div>
<span class="t" style="transform:scaleX(0.9824);left:371.9px;top:317px;font-size:6px;line-height:6px;font-weight:400;color:#2e2e2e;">Display Name</span>
<svg style="left:410.6px;top:318.8px;" width="4.8" height="2.6" viewBox="0 0 4.8 2.6"><path d="M0 2.6 L2.4 0 L4.8 2.6 Z" fill="#555"/></svg>
<span class="t" style="transform:scaleX(0.9740);left:467.2px;top:317px;font-size:6px;line-height:6px;font-weight:400;color:#2e2e2e;">Name</span>
<span class="t" style="transform:scaleX(0.9373);left:546.8px;top:317px;font-size:6px;line-height:6px;font-weight:400;color:#2e2e2e;">Type</span>
<div style="left:357.4px;top:326.79999999999995px;width:6.2px;height:6.2px;background:#fff;border:1px solid #8585a6;border-radius:1.2px;"></div>
<span class="t" style="transform:scaleX(0.9772);left:372.8px;top:327px;font-size:6px;line-height:6px;font-weight:400;color:#262626;">(Deprecated) Stage Id</span>
<span class="t" style="transform:scaleX(0.9866);left:472.3px;top:327px;font-size:6px;line-height:6px;font-weight:400;color:#262626;">stageid</span>
<span class="t" style="transform:scaleX(1.0159);left:555px;top:327px;font-size:6px;line-height:6px;font-weight:400;color:#262626;">Unique Identifier</span>
<div style="left:357.4px;top:337.72999999999996px;width:6.2px;height:6.2px;background:#fff;border:1px solid #8585a6;border-radius:1.2px;"></div>
<span class="t" style="transform:scaleX(0.9616);left:372.8px;top:338px;font-size:6px;line-height:6px;font-weight:400;color:#262626;">(Deprecated) Traversed Path</span>
<span class="t" style="transform:scaleX(0.9945);left:472.3px;top:338px;font-size:6px;line-height:6px;font-weight:400;color:#262626;">traversedpath</span>
<span class="t" style="transform:scaleX(0.9686);left:555px;top:338px;font-size:6px;line-height:6px;font-weight:400;color:#262626;">Single Line of Text</span>
<div style="left:357.4px;top:348.65999999999997px;width:6.2px;height:6.2px;background:#fff;border:1px solid #8585a6;border-radius:1.2px;"></div>
<span class="t" style="transform:scaleX(0.9876);left:372.8px;top:349px;font-size:6px;line-height:6px;font-weight:400;color:#262626;">Accept Submission</span>
<span class="t" style="transform:scaleX(0.9795);left:472.3px;top:349px;font-size:6px;line-height:6px;font-weight:400;color:#262626;">bw_acceptsubmission</span>
<span class="t" style="transform:scaleX(0.9922);left:555px;top:349px;font-size:6px;line-height:6px;font-weight:400;color:#262626;">Two Options</span>
<div style="left:357.4px;top:359.59px;width:6.2px;height:6.2px;background:#fff;border:1px solid #8585a6;border-radius:1.2px;"></div>
<span class="t" style="transform:scaleX(1.0007);left:372.8px;top:360px;font-size:6px;line-height:6px;font-weight:400;color:#262626;">Approval Comments</span>
<span class="t" style="transform:scaleX(0.9837);left:472.3px;top:360px;font-size:6px;line-height:6px;font-weight:400;color:#262626;">bw_approvalcomments</span>
<span class="t" style="transform:scaleX(0.9996);left:555px;top:360px;font-size:6px;line-height:6px;font-weight:400;color:#262626;">Multiple Lines of Text</span>
<div style="left:357.4px;top:370.5199999999999px;width:6.2px;height:6.2px;background:#fff;border:1px solid #8585a6;border-radius:1.2px;"></div>
<span class="t" style="transform:scaleX(0.9992);left:372.8px;top:371px;font-size:6px;line-height:6px;font-weight:400;color:#262626;">Approval Date</span>
<span class="t" style="transform:scaleX(0.9846);left:472.3px;top:371px;font-size:6px;line-height:6px;font-weight:400;color:#262626;">bw_approvaldate</span>
<span class="t" style="transform:scaleX(0.9838);left:555px;top:371px;font-size:6px;line-height:6px;font-weight:400;color:#262626;">Date and Time</span>
<div style="left:357.4px;top:381.44999999999993px;width:6.2px;height:6.2px;background:#fff;border:1px solid #8585a6;border-radius:1.2px;"></div>
<span class="t" style="transform:scaleX(0.9460);left:372.8px;top:382px;font-size:6px;line-height:6px;font-weight:400;color:#262626;">Approval Responses JSON</span>
<span class="t" style="transform:scaleX(0.9722);left:472.3px;top:382px;font-size:6px;line-height:6px;font-weight:400;color:#262626;">bw_approvalresponsesjson</span>
<span class="t" style="transform:scaleX(0.9686);left:555px;top:382px;font-size:6px;line-height:6px;font-weight:400;color:#262626;">Single Line of Text</span>
<div style="left:357.4px;top:392.37999999999994px;width:6.2px;height:6.2px;background:#fff;border:1px solid #8585a6;border-radius:1.2px;"></div>
<span class="t" style="transform:scaleX(1.0107);left:372.8px;top:393px;font-size:6px;line-height:6px;font-weight:400;color:#262626;">approve2</span>
<span class="t" style="transform:scaleX(0.9769);left:472.3px;top:393px;font-size:6px;line-height:6px;font-weight:400;color:#262626;">bw_approve2</span>
<span class="t" style="transform:scaleX(0.9996);left:555px;top:393px;font-size:6px;line-height:6px;font-weight:400;color:#262626;">Multiple Lines of Text</span>
<div style="left:357.4px;top:403.30999999999995px;width:6.2px;height:6.2px;background:#fff;border:1px solid #8585a6;border-radius:1.2px;"></div>
<span class="t" style="transform:scaleX(1.0099);left:372.8px;top:404px;font-size:6px;line-height:6px;font-weight:400;color:#262626;">Approver</span>
<span class="t" style="transform:scaleX(0.9773);left:472.3px;top:404px;font-size:6px;line-height:6px;font-weight:400;color:#262626;">bw_approver</span>
<span class="t" style="transform:scaleX(1.0006);left:555px;top:404px;font-size:6px;line-height:6px;font-weight:400;color:#262626;">Lookup</span>
<div style="left:335.2px;top:426px;width:310.6px;height:23.6px;background:#f8f8f8;"></div>
<div style="left:538px;top:431.1px;width:44px;height:13.6px;background:#0f5fb9;"></div>
<span class="t" style="transform:scaleX(0.9403);left:555.5px;top:436px;font-size:6.6px;line-height:6.6px;font-weight:700;color:#fff;">OK</span>
<div style="left:586px;top:431.1px;width:44.1px;height:13.6px;background:#fff;border:1px solid #4490e8;"></div>
<span class="t" style="transform:scaleX(0.9498);left:598.4px;top:436px;font-size:6.6px;line-height:6.6px;font-weight:400;color:#1f6cc4;">Cancel</span>
</div>
</body></html>
